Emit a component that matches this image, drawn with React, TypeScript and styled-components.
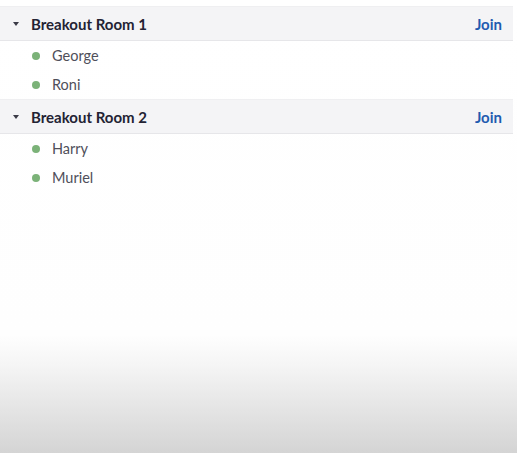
import React from "react";
import styled, { createGlobalStyle } from "styled-components";

const GlobalStyle = createGlobalStyle`
  html, body {
    margin: 0;
    padding: 0;
    height: 100%;
  }
  body {
    font-family: "Lato", "Noto Sans", sans-serif;
    background: #ffffff;
  }
  #root {
    height: 100%;
  }
`;

const Page = styled.div`
  height: 453px;
  padding-top: 6px;
  box-sizing: border-box;
  background: linear-gradient(
    to bottom,
    #ffffff 0px,
    #fefefe 335px,
    #f5f5f5 365px,
    #e6e6e6 405px,
    #d4d4d4 453px
  );
`;

const List = styled.div`
  width: 513px;
`;

const RoomHeader = styled.div`
  display: flex;
  align-items: center;
  height: 35px;
  padding: 0 11px 0 12px;
  background: #f4f4f6;
  border-top: 1px solid #efeff1;
  border-bottom: 1px solid #e6e6e9;
  box-sizing: border-box;
`;

const Caret = styled.span`
  width: 0;
  height: 0;
  border-left: 3.5px solid transparent;
  border-right: 3.5px solid transparent;
  border-top: 4.5px solid #3a3a46;
  margin: 0 12px 0 1px;
`;

const RoomName = styled.span`
  flex: 1;
  font-size: 15px;
  font-weight: 700;
  color: #232333;
`;

const JoinButton = styled.button`
  border: none;
  background: none;
  padding: 0;
  font-family: inherit;
  font-size: 15px;
  font-weight: 700;
  color: #1f5bb0;
  cursor: pointer;
`;

const Member = styled.div`
  display: flex;
  align-items: center;
  height: 29px;
  padding-left: 32px;
`;

const Dot = styled.span<{ $color: string }>`
  width: 8px;
  height: 8px;
  border-radius: 50%;
  background: ${(p) => p.$color};
  margin-right: 12px;
`;

const MemberName = styled.span`
  font-size: 14.5px;
  color: #4f4f5a;
`;

const rooms = [
  { name: "Breakout Room 1", members: ["George", "Roni"] },
  { name: "Breakout Room 2", members: ["Harry", "Muriel"] },
];

export default function App() {
  return (
    <>
      <GlobalStyle />
      <Page>
        <List>
          {rooms.map((room) => (
            <div key={room.name}>
              <RoomHeader>
                <Caret />
                <RoomName>{room.name}</RoomName>
                <JoinButton>Join</JoinButton>
              </RoomHeader>
              {room.members.map((m) => (
                <Member key={m}>
                  <Dot $color="#7bb278" />
                  <MemberName>{m}</MemberName>
                </Member>
              ))}
            </div>
          ))}
        </List>
      </Page>
    </>
  );
}
